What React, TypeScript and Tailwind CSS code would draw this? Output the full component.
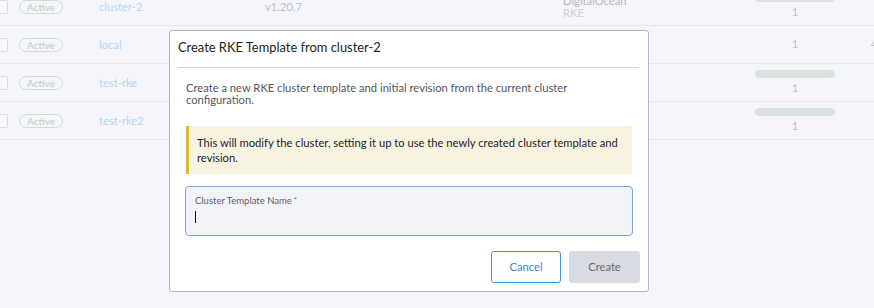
import React from "react";

type Row = {
  name: string;
  version?: string;
  provider?: string;
  sub?: string;
  bar: boolean;
  extra?: string;
};

const rows: Row[] = [
  { name: "cluster-2", version: "v1.20.7", provider: "DigitalOcean", sub: "RKE", bar: true },
  { name: "local", bar: false, extra: "4" },
  { name: "test-rke", bar: true },
  { name: "test-rke2", bar: true },
];

function TableRow({ r, first }: { r: Row; first: boolean }) {
  return (
    <div
      className={`flex items-center h-[38px] border-b border-[#e6e7ee] ${first ? "mt-[-12px]" : ""}`}
    >
      <div className="ml-[-6px] w-[14px] h-[14px] rounded-[2px] border border-[#dcdde4] bg-[#f7f8fb] shrink-0" />
      <div className="ml-[11px] w-[44px] h-[14px] rounded-full border border-[#cde0d3] flex items-center justify-center text-[10px] leading-none text-[#b8d2c0] shrink-0">
        Active
      </div>
      <div className="ml-[36px] w-[166px] text-[11.2px] leading-[14px] text-[#b9d5ef] shrink-0">{r.name}</div>
      <div className="w-[298px] text-[11.2px] leading-[14px] text-[#c2c2c7] shrink-0">{r.version ?? ""}</div>
      <div className="w-[192px] shrink-0 flex flex-col text-[11.2px] leading-[12px]">
        {r.provider ? (
          <>
            <span className="text-[#b9b9be]">{r.provider}</span>
            <span className="text-[#d0d0d5]">{r.sub}</span>
          </>
        ) : null}
      </div>
      <div className="w-[80px] shrink-0 flex flex-col items-center">
        {r.bar ? <div className="w-[80px] h-[8px] rounded-full bg-[#dbe3e1]" /> : null}
        <span className={`text-[10.5px] leading-[13px] text-[#bdbdc2] ${r.bar ? "mt-[4px]" : ""}`}>1</span>
      </div>
      <div className="ml-[36px] text-[10.5px] leading-[13px] text-[#bdbdc2] shrink-0">{r.extra ?? ""}</div>
    </div>
  );
}

export default function App() {
  return (
    <div className="relative w-[874px] h-[308px] overflow-hidden bg-[#f4f5fa] font-['Lato','Liberation_Sans',sans-serif]">
      <div className="flex flex-col">
        {rows.map((r, i) => (
          <TableRow key={r.name} r={r} first={i === 0} />
        ))}
      </div>

      <div className="absolute left-[169px] top-[30px] w-[480px] h-[262px] bg-white border border-[#b5b5c2] rounded-[3px] flex flex-col">
        <div className="ml-[8px] mr-[9px] h-[37px] border-b border-[#d5d5dd] pt-[8px]">
          <h2 className="text-[12.9px] leading-[16px] text-[#1e1e22] font-normal">
            Create RKE Template from cluster-2
          </h2>
        </div>
        <div className="px-[16px] pt-[14px] flex flex-col">
          <p className="text-[11.2px] leading-[12px] text-[#55555c]">
            Create a new RKE cluster template and initial revision from the current cluster configuration.
          </p>
          <div className="mt-[20px] bg-[#f8f3e1] border-l-[3px] border-[#d6b936] pl-[8px] pr-[10px] py-[9px] text-[11.2px] leading-[15px] text-[#222226]">
            This will modify the cluster, setting it up to use the newly created cluster template and revision.
          </div>
          <div className="mt-[12px] mx-[-1px] h-[50px] rounded-[4px] border border-[#79a6d6] bg-[#f2f3f8] px-[9px] pt-[7px]">
            <div className="text-[9.5px] leading-[13px] text-[#5d5d66]">
              Cluster Template Name<span className="text-[#e0403a] ml-[2px] text-[8px] align-top">*</span>
            </div>
            <div className="mt-[4px] w-[1px] h-[12px] bg-[#111]" />
          </div>
        </div>
        <div className="mt-auto flex justify-end gap-[8px] pr-[8px] pb-[8px]">
          <button className="w-[70px] h-[32px] rounded-[3px] border border-[#3d8fd6] bg-white text-[11.2px] text-[#3b88cc]">
            Cancel
          </button>
          <button className="w-[71px] h-[32px] rounded-[3px] bg-[#d9dbe3] text-[11.2px] text-[#6a6a72]">
            Create
          </button>
        </div>
      </div>
    </div>
  );
}
